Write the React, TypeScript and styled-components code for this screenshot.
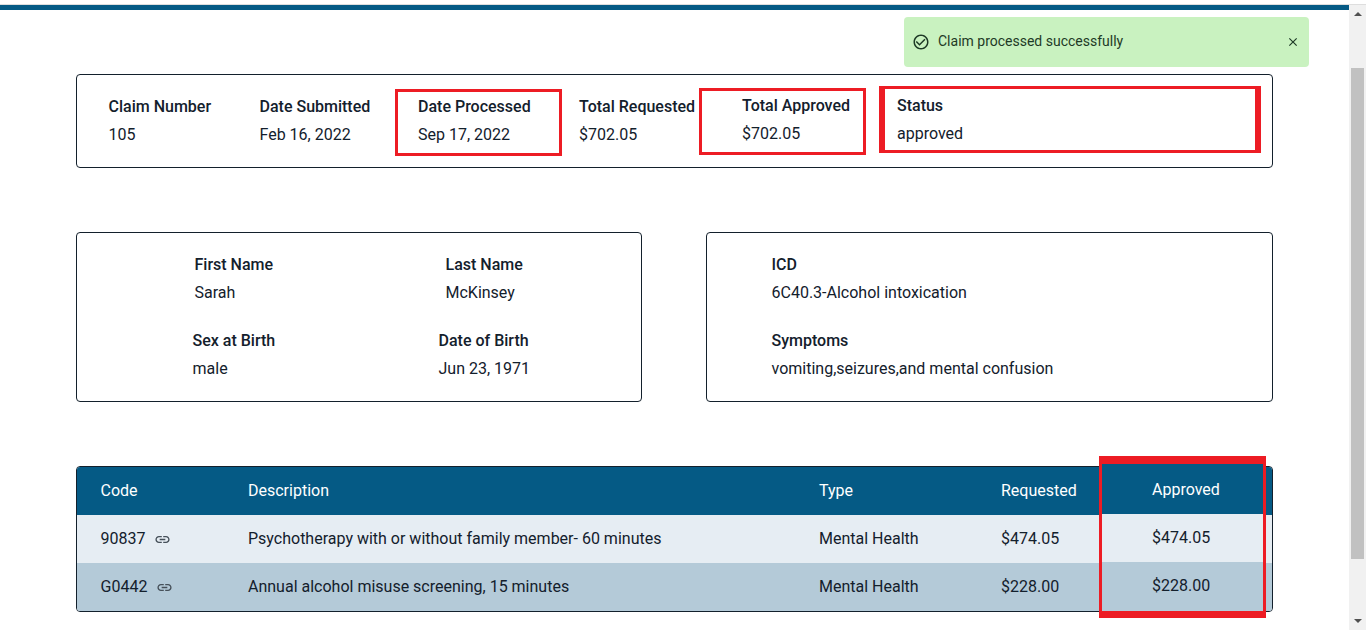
import styled, { createGlobalStyle } from 'styled-components'

const GlobalStyle = createGlobalStyle`
  html, body {
    margin: 0;
    padding: 0;
    background: #fff;
    overflow: hidden;
  }
  * {
    box-sizing: border-box;
  }
`

const Screen = styled.div`
  width: 1366px;
  height: 630px;
  padding-top: 4px;
  overflow: hidden;
  font-family: Roboto, 'Liberation Sans', sans-serif;
  font-size: 16px;
  line-height: 24px;
  color: #13202c;
`

const Frame = styled.div`
  display: flex;
  height: 626px;
  border-top: 1px solid #dedede;
`

const Main = styled.main`
  position: relative;
  flex: 1;
  border-top: 5px solid #055a85;
`

const Content = styled.div`
  display: flex;
  flex-direction: column;
  gap: 64px;
  padding: 64px 76px 0;
`

const Scrollbar = styled.div`
  display: flex;
  flex-direction: column;
  align-items: center;
  width: 17px;
  background: #f1f1f1;
`

const ArrowUp = styled.div`
  width: 0;
  margin: 7px 0 52px;
  border: 4px solid transparent;
  border-top: 0;
  border-bottom-color: #505050;
`

const ArrowDown = styled.div`
  width: 0;
  margin-top: 60px;
  border: 4px solid transparent;
  border-bottom: 0;
  border-top-color: #505050;
`

const Thumb = styled.div`
  width: 13px;
  height: 491px;
  background: #c1c1c1;
`

const Toast = styled.div`
  position: absolute;
  top: 7px;
  left: 904px;
  display: flex;
  align-items: center;
  width: 405px;
  height: 50px;
  padding: 0 8px;
  border-radius: 4px;
  background: #c9f2c0;
  color: #1e3a26;
  font-size: 14px;
`

const ToastMessage = styled.span`
  flex: 1;
  margin: -2px 0 0 8px;
`

const ToastIcon = styled.svg`
  width: 18px;
  height: 18px;
  fill: currentColor;
`

const CloseIcon = styled.svg`
  width: 14px;
  height: 14px;
  margin-right: 1px;
  fill: currentColor;
`

const Card = styled.section`
  border: 1px solid #13202c;
  border-radius: 4px;
  background: #fff;
`

const SummaryCard = styled(Card)`
  display: flex;
  padding: 20px 0 20px 31.5px;
`

const SummaryCell = styled.div<{ $width?: number; $lift?: boolean }>`
  position: relative;
  display: flex;
  flex-direction: column;
  gap: 4px;
  flex: ${(p) => (p.$width ? `0 0 ${p.$width}px` : 1)};
  margin-top: ${(p) => (p.$lift ? -1 : 0)}px;
`

const Label = styled.div`
  font-weight: 500;
`

const Value = styled.div``

const Panels = styled.div`
  display: grid;
  grid-template-columns: 566px 567px;
  gap: 64px;
`

const InfoCard = styled(Card)`
  display: flex;
  flex-direction: column;
  gap: 24px;
  height: 170px;
  padding-top: 20px;
`

const InfoRow = styled.div<{ $indent: number; $column?: number }>`
  display: grid;
  grid-template-columns: ${(p) => (p.$column ? `${p.$column}px 1fr` : '1fr')};
  padding-left: ${(p) => p.$indent}px;
`

const Field = styled.div`
  display: flex;
  flex-direction: column;
  gap: 4px;
`

const TableWrap = styled.div`
  position: relative;
`

const Table = styled(Card)`
  overflow: hidden;
`

const Row = styled.div<{ $bg: string; $color?: string }>`
  display: flex;
  align-items: center;
  height: 48px;
  background: ${(p) => p.$bg};
  color: ${(p) => p.$color ?? 'inherit'};
`

const Cell = styled.div<{ $width: number; $pad?: number }>`
  display: flex;
  align-items: center;
  flex: 0 0 ${(p) => p.$width}px;
  padding-left: ${(p) => p.$pad ?? 0}px;
`

const LinkIcon = styled.svg`
  width: 17px;
  height: 17px;
  margin-left: 8.5px;
  fill: #465059;
`

/* the red marks and the re-pasted column sit on top of the table */
const Highlight = styled.div<{ $top: number; $left: number; $w: number; $side?: number }>`
  position: absolute;
  top: ${(p) => p.$top}px;
  left: ${(p) => p.$left}px;
  width: ${(p) => p.$w}px;
  height: 67px;
  border: 3px solid #ed1c24;
  border-left-width: ${(p) => p.$side ?? 3}px;
  border-right-width: ${(p) => p.$side ?? 3}px;
  pointer-events: none;
`

const ApprovedColumn = styled.div`
  position: absolute;
  top: -10px;
  left: 1023px;
  display: flex;
  flex-direction: column;
  width: 167px;
  height: 162px;
  border: 3px solid #ed1c24;
  border-top-width: 8px;
  border-bottom-width: 7px;
`

const ApprovedCell = styled.div<{ $bg: string; $color?: string; $height: number; $nudge?: number }>`
  display: flex;
  align-items: center;
  height: ${(p) => p.$height}px;
  padding-left: 50px;
  padding-top: ${(p) => Math.max(p.$nudge ?? 0, 0)}px;
  padding-bottom: ${(p) => Math.max(-(p.$nudge ?? 0), 0)}px;
  background: ${(p) => p.$bg};
  color: ${(p) => p.$color ?? 'inherit'};
`

const HEADER_BG = '#055a85'
const ROW_LIGHT = '#e6edf3'
const ROW_DARK = '#b4cad8'

const COLUMNS = [171, 571, 182, 160]

const LINES = [
  {
    code: '90837',
    description: 'Psychotherapy with or without family member- 60 minutes',
    type: 'Mental Health',
    requested: '$474.05',
    approved: '$474.05',
    bg: ROW_LIGHT,
    approvedHeight: 48,
    nudge: 0,
  },
  {
    code: 'G0442',
    description: 'Annual alcohol misuse screening, 15 minutes',
    type: 'Mental Health',
    requested: '$228.00',
    approved: '$228.00',
    bg: ROW_DARK,
    approvedHeight: 49,
    nudge: -1,
  },
]

const App = () => {
  return (
    <>
      <GlobalStyle />
      <Screen>
        <Frame>
          <Main>
            <Toast>
              <ToastIcon viewBox="0 0 24 24">
                <path d="M16.59 7.58 10 14.17l-3.59-3.58L5 12l5 5 8-8zM12 2C6.48 2 2 6.48 2 12s4.48 10 10 10 10-4.48 10-10S17.52 2 12 2zm0 18c-4.42 0-8-3.58-8-8s3.58-8 8-8 8 3.58 8 8-3.58 8-8 8z" />
              </ToastIcon>
              <ToastMessage>Claim processed successfully</ToastMessage>
              <CloseIcon viewBox="0 0 24 24">
                <path d="M19 6.41 17.59 5 12 10.59 6.41 5 5 6.41 10.59 12 5 17.59 6.41 19 12 13.41 17.59 19 19 17.59 13.41 12z" />
              </CloseIcon>
            </Toast>

            <Content>
              <SummaryCard>
                <SummaryCell $width={151}>
                  <Label>Claim Number</Label>
                  <Value>105</Value>
                </SummaryCell>
                <SummaryCell $width={158.5}>
                  <Label>Date Submitted</Label>
                  <Value>Feb 16, 2022</Value>
                </SummaryCell>
                <SummaryCell $width={161}>
                  <Label>Date Processed</Label>
                  <Value>Sep 17, 2022</Value>
                  <Highlight $top={-6} $left={-23} $w={167} />
                </SummaryCell>
                <SummaryCell $width={163}>
                  <Label>Total Requested</Label>
                  <Value>$702.05</Value>
                </SummaryCell>
                <SummaryCell $width={155} $lift>
                  <Label>Total Approved</Label>
                  <Value>$702.05</Value>
                  <Highlight $top={-6} $left={-43} $w={167} />
                </SummaryCell>
                <SummaryCell $lift>
                  <Label>Status</Label>
                  <Value>approved</Value>
                  <Highlight $top={-8} $left={-18} $w={382} $side={6} />
                </SummaryCell>
              </SummaryCard>

              <Panels>
                <InfoCard>
                  <InfoRow $indent={117.5} $column={251}>
                    <Field>
                      <Label>First Name</Label>
                      <Value>Sarah</Value>
                    </Field>
                    <Field>
                      <Label>Last Name</Label>
                      <Value>McKinsey</Value>
                    </Field>
                  </InfoRow>
                  <InfoRow $indent={115.5} $column={246}>
                    <Field>
                      <Label>Sex at Birth</Label>
                      <Value>male</Value>
                    </Field>
                    <Field>
                      <Label>Date of Birth</Label>
                      <Value>Jun 23, 1971</Value>
                    </Field>
                  </InfoRow>
                </InfoCard>
                <InfoCard>
                  <InfoRow $indent={64.5}>
                    <Field>
                      <Label>ICD</Label>
                      <Value>6C40.3-Alcohol intoxication</Value>
                    </Field>
                  </InfoRow>
                  <InfoRow $indent={64.5}>
                    <Field>
                      <Label>Symptoms</Label>
                      <Value>vomiting,seizures,and mental confusion</Value>
                    </Field>
                  </InfoRow>
                </InfoCard>
              </Panels>

              <TableWrap>
                <Table>
                  <Row $bg={HEADER_BG} $color="#fff">
                    <Cell $width={COLUMNS[0]} $pad={23.5}>Code</Cell>
                    <Cell $width={COLUMNS[1]}>Description</Cell>
                    <Cell $width={COLUMNS[2]}>Type</Cell>
                    <Cell $width={COLUMNS[3]}>Requested</Cell>
                  </Row>
                  {LINES.map((line) => (
                    <Row key={line.code} $bg={line.bg}>
                      <Cell $width={COLUMNS[0]} $pad={23.5}>
                        {line.code}
                        <LinkIcon viewBox="0 0 24 24">
                          <path d="M3.9 12c0-1.71 1.39-3.1 3.1-3.1h4V7H7c-2.76 0-5 2.24-5 5s2.24 5 5 5h4v-1.9H7c-1.71 0-3.1-1.39-3.1-3.1zM8 13h8v-2H8v2zm9-6h-4v1.9h4c1.71 0 3.1 1.39 3.1 3.1s-1.39 3.1-3.1 3.1h-4V17h4c2.76 0 5-2.24 5-5s-2.24-5-5-5z" />
                        </LinkIcon>
                      </Cell>
                      <Cell $width={COLUMNS[1]}>{line.description}</Cell>
                      <Cell $width={COLUMNS[2]}>{line.type}</Cell>
                      <Cell $width={COLUMNS[3]}>{line.requested}</Cell>
                    </Row>
                  ))}
                </Table>
                <ApprovedColumn>
                  <ApprovedCell $bg={HEADER_BG} $color="#fff" $height={50} $nudge={2}>Approved</ApprovedCell>
                  {LINES.map((line) => (
                    <ApprovedCell key={line.code} $bg={line.bg} $height={line.approvedHeight} $nudge={line.nudge}>
                      {line.approved}
                    </ApprovedCell>
                  ))}
                </ApprovedColumn>
              </TableWrap>
            </Content>
          </Main>
          <Scrollbar>
            <ArrowUp />
            <Thumb />
            <ArrowDown />
          </Scrollbar>
        </Frame>
      </Screen>
    </>
  )
}

export default App
